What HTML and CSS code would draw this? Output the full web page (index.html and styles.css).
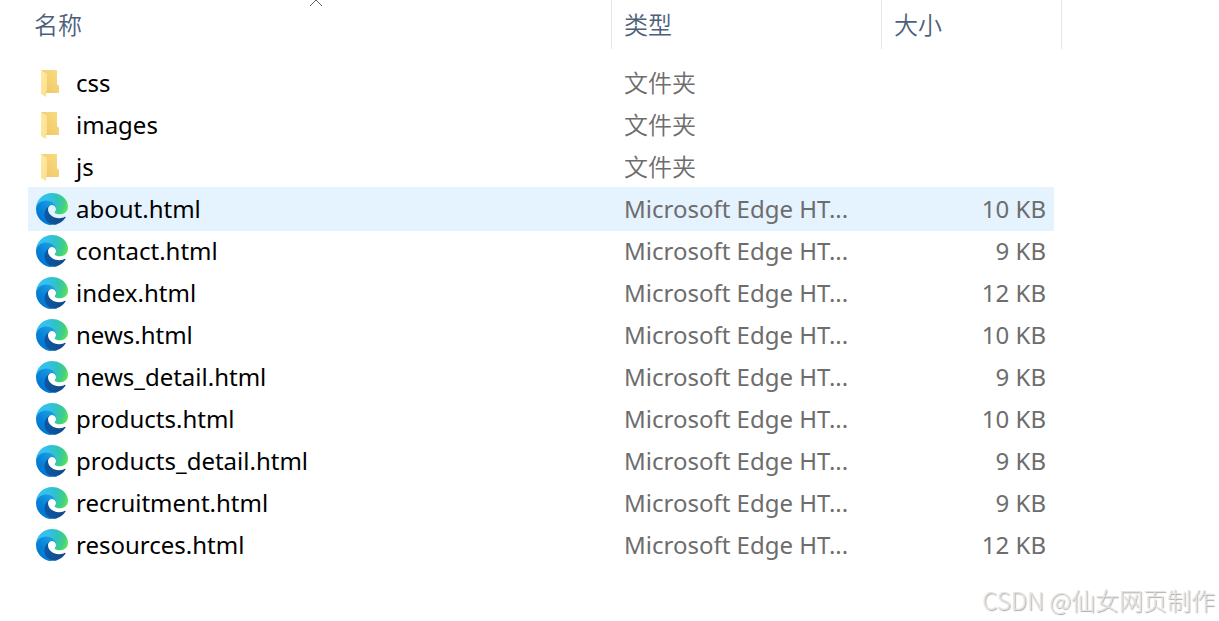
FILE: index.html
```html
<!DOCTYPE html>
<html lang="zh-CN">
<head>
    <meta charset="UTF-8">
    <meta name="viewport" content="width=device-width, initial-scale=1.0">
    <title>文件列表</title>
    <link rel="stylesheet" href="styles.css">
</head>
<body>
    <!-- Shared icons -->
    <svg class="sprite" aria-hidden="true">
        <defs>
            <linearGradient id="folder-back" x1="0" y1="1" x2="1" y2="0">
                <stop offset="0" stop-color="#ecc564"/>
                <stop offset="1" stop-color="#fbdc82"/>
            </linearGradient>
            <linearGradient id="folder-front" x1="0" y1="0" x2="1" y2="1">
                <stop offset="0" stop-color="#ffe9a6"/>
                <stop offset="1" stop-color="#fddf8c"/>
            </linearGradient>
            <linearGradient id="edge-dark" gradientUnits="userSpaceOnUse" x1="63" y1="178" x2="241" y2="178">
                <stop offset="0" stop-color="#0c59a4"/>
                <stop offset="1" stop-color="#114a8b"/>
            </linearGradient>
            <linearGradient id="edge-blue" gradientUnits="userSpaceOnUse" x1="157" y1="100" x2="46" y2="221">
                <stop offset="0" stop-color="#1b9de2"/>
                <stop offset="0.2" stop-color="#1595df"/>
                <stop offset="0.67" stop-color="#0680d7"/>
                <stop offset="1" stop-color="#0078d4"/>
            </linearGradient>
            <radialGradient id="edge-sea" gradientUnits="userSpaceOnUse" cx="30" cy="52" r="250">
                <stop offset="0" stop-color="#35c1f1"/>
                <stop offset="0.25" stop-color="#34c1ed"/>
                <stop offset="0.55" stop-color="#2fc2c4"/>
                <stop offset="0.8" stop-color="#3fcf85"/>
                <stop offset="1" stop-color="#66eb4e"/>
            </radialGradient>
        </defs>
        <symbol id="icon-folder" viewBox="0 0 32 32">
            <path fill="url(#folder-back)" d="M5 3h16v14l2 2v7H9z"/>
            <path fill="url(#folder-front)" d="M5 3l6 4v17l-1 1v5l-5-3z"/>
        </symbol>
        <symbol id="icon-edge" viewBox="4.63 4.92 256 256">
            <path fill="url(#edge-dark)" d="M235.68,195.46a93.73,93.73,0,0,1-10.54,4.71,101.87,101.87,0,0,1-35.9,6.46c-47.32,0-88.54-32.55-88.54-74.32A31.48,31.48,0,0,1,117.13,105c-42.8,1.8-53.8,46.4-53.8,72.53,0,73.88,68.09,81.37,82.76,81.37,7.91,0,19.84-2.3,27-4.56l1.31-.44A128.34,128.34,0,0,0,241,201.1,4,4,0,0,0,235.68,195.46Z"/>
            <path fill="url(#edge-blue)" d="M110.34,246.34A79.2,79.2,0,0,1,87.6,225a80.72,80.72,0,0,1,29.53-120c3.12-1.47,8.45-4.13,15.54-4a32.35,32.35,0,0,1,25.69,13,31.88,31.88,0,0,1,6.36,18.66c0-.21,24.46-79.6-80-79.6-43.9,0-80,41.66-80,78.21a130.15,130.15,0,0,0,12.11,56,128,128,0,0,0,156.38,67.11,75.55,75.55,0,0,1-62.78-8Z"/>
            <path fill="url(#edge-sea)" d="M156.94,153.78c-.81,1.05-3.3,2.5-3.3,5.66,0,2.61,1.7,5.12,4.72,7.23,14.38,10,41.49,8.68,41.56,8.68A59.56,59.56,0,0,0,230.19,167a61.38,61.38,0,0,0,30.43-52.88c.26-22.41-8-37.31-11.34-43.91C228.09,28.76,182.35,4.92,132.61,4.92a128,128,0,0,0-128,126.2c.48-36.54,36.8-66.05,80-66.05,3.5,0,23.46.34,42,10.07,16.34,8.58,24.9,18.94,30.85,29.21,6.18,10.67,7.28,24.15,7.28,29.52S162,147.2,156.94,153.78Z"/>
        </symbol>
    </svg>

    <main class="explorer">
        <table class="file-list">
            <colgroup>
                <col>
                <col class="col-type">
                <col class="col-size">
                <col class="col-end">
            </colgroup>
            <thead>
                <tr>
                    <th class="head-name" aria-sort="ascending">
                        <button type="button">名称</button>
                        <svg class="sort-mark" viewBox="0 0 14 7" aria-hidden="true"><path d="M1 6l6-6 6 6"/></svg>
                    </th>
                    <th><button type="button">类型</button></th>
                    <th colspan="2"><button type="button">大小</button></th>
                </tr>
            </thead>
            <tbody>
                <tr>
                    <td><a class="file" href="css/"><svg class="icon"><use href="#icon-folder"/></svg>css</a></td>
                    <td class="type folder">文件夹</td>
                    <td class="size"></td>
                </tr>
                <tr>
                    <td><a class="file" href="images/"><svg class="icon"><use href="#icon-folder"/></svg>images</a></td>
                    <td class="type folder">文件夹</td>
                    <td class="size"></td>
                </tr>
                <tr>
                    <td><a class="file" href="js/"><svg class="icon"><use href="#icon-folder"/></svg>js</a></td>
                    <td class="type folder">文件夹</td>
                    <td class="size"></td>
                </tr>
                <tr class="active">
                    <td><a class="file" href="about.html"><svg class="icon"><use href="#icon-edge"/></svg>about.html</a></td>
                    <td class="type">Microsoft Edge HT...</td>
                    <td class="size">10 KB</td>
                </tr>
                <tr>
                    <td><a class="file" href="contact.html"><svg class="icon"><use href="#icon-edge"/></svg>contact.html</a></td>
                    <td class="type">Microsoft Edge HT...</td>
                    <td class="size">9 KB</td>
                </tr>
                <tr>
                    <td><a class="file" href="index.html"><svg class="icon"><use href="#icon-edge"/></svg>index.html</a></td>
                    <td class="type">Microsoft Edge HT...</td>
                    <td class="size">12 KB</td>
                </tr>
                <tr>
                    <td><a class="file" href="news.html"><svg class="icon"><use href="#icon-edge"/></svg>news.html</a></td>
                    <td class="type">Microsoft Edge HT...</td>
                    <td class="size">10 KB</td>
                </tr>
                <tr>
                    <td><a class="file" href="news_detail.html"><svg class="icon"><use href="#icon-edge"/></svg>news_detail.html</a></td>
                    <td class="type">Microsoft Edge HT...</td>
                    <td class="size">9 KB</td>
                </tr>
                <tr>
                    <td><a class="file" href="products.html"><svg class="icon"><use href="#icon-edge"/></svg>products.html</a></td>
                    <td class="type">Microsoft Edge HT...</td>
                    <td class="size">10 KB</td>
                </tr>
                <tr>
                    <td><a class="file" href="products_detail.html"><svg class="icon"><use href="#icon-edge"/></svg>products_detail.html</a></td>
                    <td class="type">Microsoft Edge HT...</td>
                    <td class="size">9 KB</td>
                </tr>
                <tr>
                    <td><a class="file" href="recruitment.html"><svg class="icon"><use href="#icon-edge"/></svg>recruitment.html</a></td>
                    <td class="type">Microsoft Edge HT...</td>
                    <td class="size">9 KB</td>
                </tr>
                <tr>
                    <td><a class="file" href="resources.html"><svg class="icon"><use href="#icon-edge"/></svg>resources.html</a></td>
                    <td class="type">Microsoft Edge HT...</td>
                    <td class="size">12 KB</td>
                </tr>
            </tbody>
        </table>
    </main>

    <div class="watermark">CSDN @仙女网页制作</div>
</body>
</html>
```
FILE: styles.css
```css
* {
    box-sizing: border-box;
}
body {
    margin: 0;
    background-color: #fff;
    color: #000;
    font-family: "Noto Sans", "Noto Sans CJK SC", sans-serif;
    font-size: 24px;
    line-height: 32px;
}
.sprite {
    position: absolute;
    width: 0;
    height: 0;
}
.explorer {
    padding: 0 157px 0 28px;
}
.file-list {
    width: 100%;
    table-layout: fixed;
    border-collapse: separate;
    border-spacing: 0;
}
.col-type {
    width: 270px;
}
.col-size {
    width: 172px;
}
.col-end {
    width: 8px;
}
th {
    height: 49px;
    padding: 0 12px;
    border-right: 1px solid #e5e5e5;
    text-align: left;
}
th button {
    display: block;
    padding: 0;
    border: none;
    background: none;
    color: #4c607a;
    font: inherit;
    font-weight: 350;
    cursor: pointer;
}
.head-name {
    position: relative;
    padding-left: 6px;
}
.sort-mark {
    position: absolute;
    top: 0;
    left: 50%;
    width: 14px;
    height: 7px;
    margin-left: -11px;
    fill: none;
    stroke: #5c5c5c;
}
/* space between the header and the first row */
tbody::before {
    content: "";
    display: block;
    height: 13px;
}
td {
    height: 42px;
    padding: 0;
    white-space: nowrap;
}
.file {
    display: flex;
    align-items: center;
    gap: 8px;
    padding-left: 8px;
    color: #000;
    text-decoration: none;
}
.icon {
    flex: none;
    width: 32px;
    height: 32px;
}
.type {
    padding-left: 12px;
    color: #6d6d6d;
}
.folder {
    font-weight: 350;
}
.size {
    padding-right: 8px;
    color: #6d6d6d;
    text-align: right;
}
.active td {
    background-color: #e5f3ff;
    box-shadow: 0 1px #e5f3ff, 0 -1px #e5f3ff;
}
.watermark {
    position: absolute;
    right: 4px;
    bottom: 5px;
    color: #e4e4e4;
    font-family: "Noto Sans CJK SC", sans-serif;
    font-weight: 300;
    text-shadow: 1px 1px 1px #aaa;
}
```
